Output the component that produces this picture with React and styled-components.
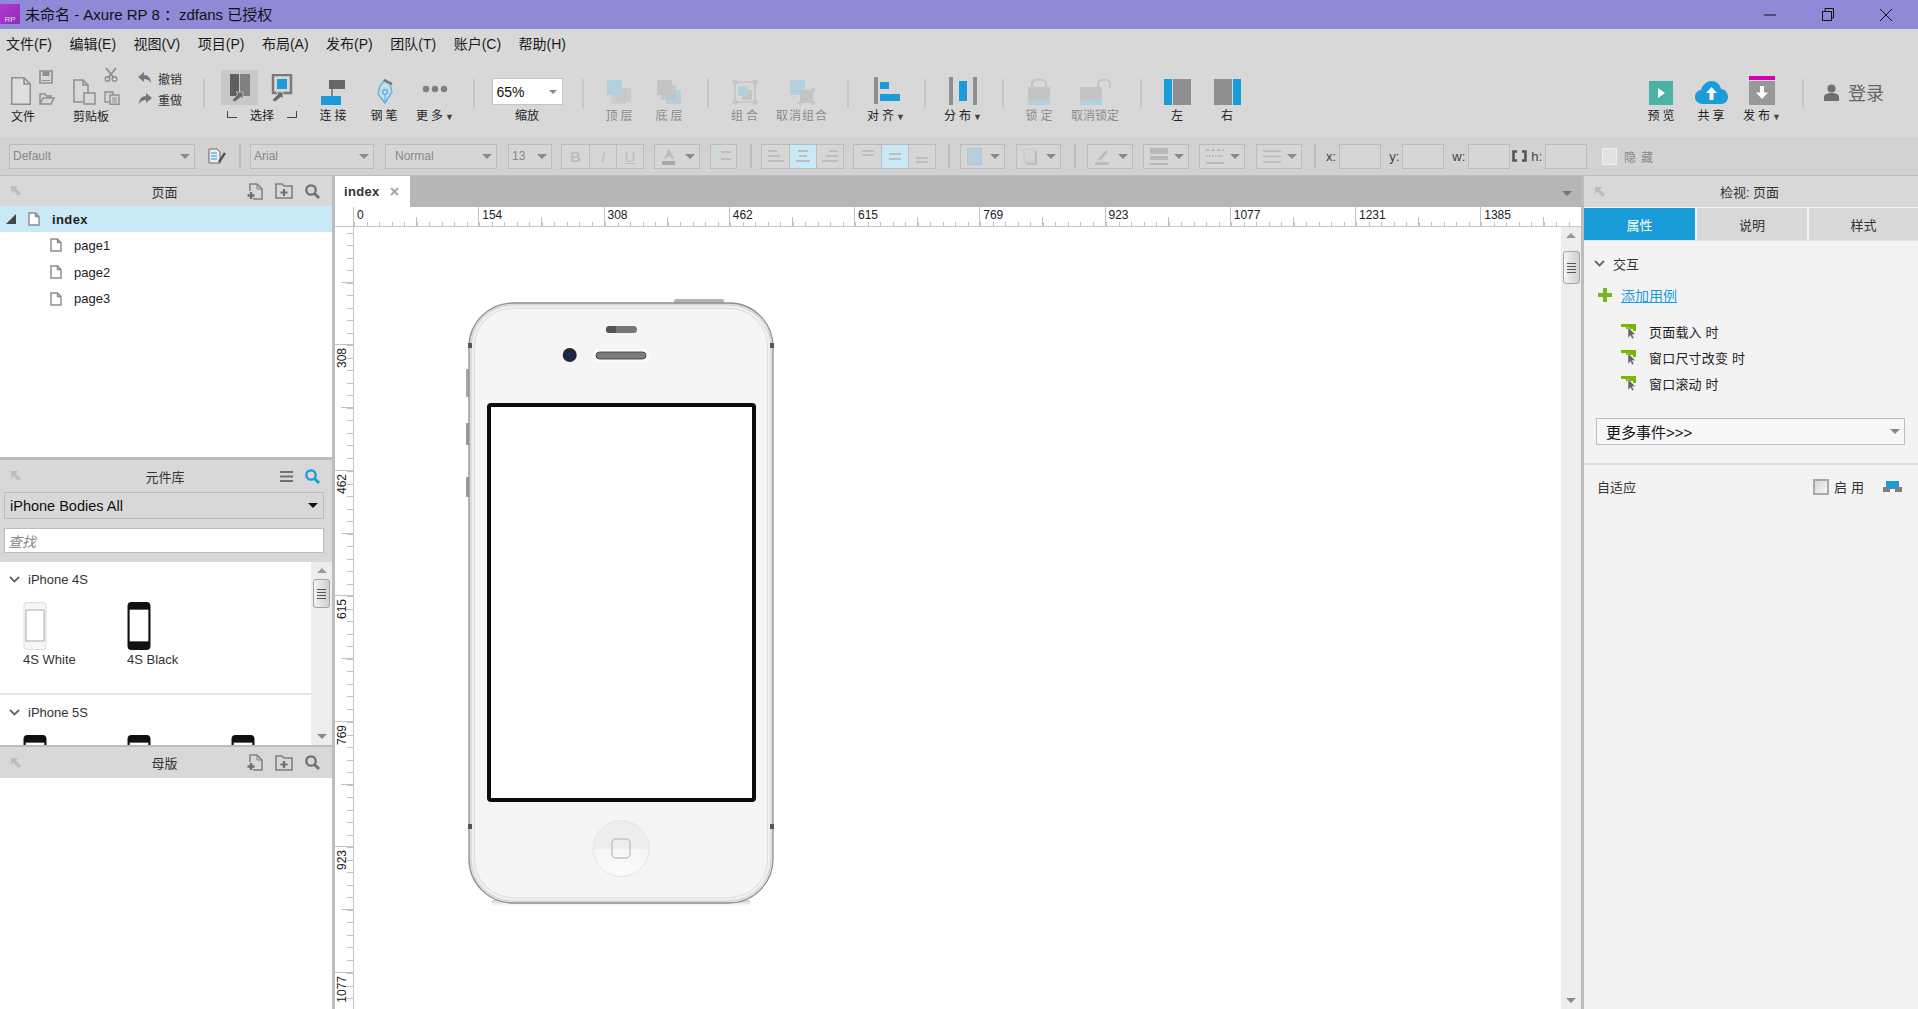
import React from "react";
import styled, { createGlobalStyle, css } from "styled-components";

const FONT = `"Liberation Sans", "Noto Sans CJK SC", sans-serif`;
const BLUE = "#1a9cd8";
const GRAY = "#8f8f8f";
const DIM = "#c4c4c4";
const DIMBLUE = "#b2d0de";

const GlobalStyle = createGlobalStyle`
  html, body { margin: 0; padding: 0; height: 100%; overflow: hidden; }
  body { font-family: ${FONT}; font-size: 13px; color: #222; background: #d8d8d8; }
  #root { height: 100%; }
`;

const ml = css`
  margin-left: ${(p) => p.$ml || 0}px;
`;

const Window = styled.div`
  width: 1918px;
  height: 1009px;
  display: flex;
  flex-direction: column;
  overflow: hidden;
`;

/* title + menu */
const TitleBar = styled.div`
  height: 29px;
  flex: none;
  background: #8e8ad8;
  display: flex;
  align-items: center;
`;

const AppLogo = styled.div`
  width: 20px;
  height: 20px;
  margin-top: -1px;
  background: linear-gradient(135deg, #b13bd0, #8d2bb8);
  color: #e9d8f2;
  font-size: 8px;
  display: flex;
  align-items: flex-end;
  justify-content: center;
`;

const TitleText = styled.div`
  margin: -2px 0 0 5px;
  font-size: 15px;
  color: #111;
`;

const WindowButtons = styled.div`
  margin-left: auto;
  display: flex;
  align-items: center;
  gap: 46px;
  padding-right: 26px;
`;

const MenuBar = styled.div`
  height: 27px;
  flex: none;
  margin-bottom: 2px;
  display: flex;
  align-items: center;
  gap: 17.5px;
  padding-left: 6px;
  font-size: 14px;
  color: #1a1a1a;
`;

/* big toolbar */
const Toolbar = styled.div`
  height: 79px;
  flex: none;
  display: flex;
  align-items: flex-start;
  padding-top: 12px;
  box-sizing: border-box;
`;

const Sep = styled.div`
  flex: none;
  width: 2px;
  height: 29px;
  margin-top: 9px;
  background: #c6c6c6;
  ${ml}
`;

const ToolCell = styled.div`
  flex: none;
  width: ${(p) => p.$w}px;
  display: flex;
  flex-direction: column;
  align-items: center;
  white-space: nowrap;
`;

const IconZone = styled.div`
  height: 35px;
  display: flex;
  align-items: flex-end;
  justify-content: center;
`;

const ToolLabel = styled.div`
  margin-top: 3px;
  height: 16px;
  line-height: 16px;
  font-size: 12px;
  letter-spacing: ${(p) => p.$sp ?? 3}px;
  padding-left: ${(p) => (p.$caret ? 0 : p.$sp ?? 3)}px;
  color: ${(p) => (p.$off ? "#8b8b8b" : "#222")};
`;

const ClusterLabel = styled.div`
  margin-top: 4px;
  height: 16px;
  line-height: 16px;
  font-size: 12px;
  color: #222;
`;

const Caret = styled.span`
  font-size: 9px;
  margin-left: -1px;
  letter-spacing: 0;
  color: #444;
`;

const Cluster = styled.div`
  flex: none;
  width: ${(p) => p.$w}px;
  padding-left: ${(p) => p.$pad}px;
  box-sizing: border-box;
  display: flex;
  flex-direction: column;
`;

const ClusterIcons = styled.div`
  height: 35px;
  display: flex;
  align-items: flex-end;
  gap: 8px;
`;

const StackedIcons = styled.div`
  display: flex;
  flex-direction: column;
  gap: 9px;
`;

const HistoryList = styled.div`
  flex: none;
  width: 71px;
  padding-left: 6px;
  box-sizing: border-box;
  display: flex;
  flex-direction: column;
  gap: 5px;
`;

const HistoryRow = styled.div`
  display: flex;
  align-items: center;
  gap: 6px;
  height: 16px;
  font-size: 12px;
  color: #333;
`;

const SelectGroup = styled.div`
  flex: none;
  width: 100px;
  padding-left: 16px;
  box-sizing: border-box;
`;

const SelectIcons = styled.div`
  display: flex;
  gap: 5px;
`;

const SelectBtn = styled.div`
  width: 37px;
  height: 35px;
  display: flex;
  align-items: center;
  justify-content: center;
  background: ${(p) => (p.$on ? "#c8c8c8" : "transparent")};
`;

const SelectLabels = styled.div`
  width: 70px;
  margin: 1px 0 0 6px;
  height: 16px;
  display: flex;
  align-items: center;
  justify-content: space-between;
  font-size: 12px;
`;

const Corner = styled.span`
  width: 9px;
  height: 6px;
  border-bottom: 1px solid #444;
  border-left: ${(p) => (p.$right ? "0" : "1px solid #444")};
  border-right: ${(p) => (p.$right ? "1px solid #444" : "0")};
`;

const ZoomBox = styled.div`
  width: 71px;
  height: 27px;
  margin-top: 8px;
  padding: 0 5px 0 4px;
  box-sizing: border-box;
  background: #fff;
  border: 1px solid #c4c4c4;
  display: flex;
  align-items: center;
  justify-content: space-between;
  font-size: 14px;
  color: #111;
`;

const RightTools = styled.div`
  margin-left: auto;
  display: flex;
  align-items: flex-start;
`;

const Login = styled.div`
  display: flex;
  align-items: center;
  gap: 9px;
  margin: 8px 34px 0 20px;
  height: 28px;
  font-size: 18px;
  color: #666;
`;

/* format bar */
const FormatBar = styled.div`
  height: 38px;
  flex: none;
  background: #d2d2d2;
  display: flex;
  align-items: center;
  color: #888;
  font-size: 12px;
`;

const FmtSep = styled.div`
  flex: none;
  width: 2px;
  height: 24px;
  background: #bdbdbd;
  ${ml}
`;

const FmtSelect = styled.div`
  flex: none;
  width: ${(p) => p.$w}px;
  height: 25px;
  box-sizing: border-box;
  border: 1px solid #bcbcbc;
  background: #d6d6d6;
  padding: 0 4px 0 ${(p) => p.$pad ?? 3}px;
  display: flex;
  align-items: center;
  justify-content: space-between;
  ${ml}
`;

const FmtSegments = styled.div`
  flex: none;
  display: flex;
  height: 25px;
  box-sizing: border-box;
  border: 1px solid #bcbcbc;
  ${ml}
`;

const FmtSegment = styled.div`
  width: ${(p) => p.$w || 27}px;
  box-sizing: border-box;
  display: flex;
  align-items: center;
  justify-content: center;
  background: ${(p) => (p.$on ? "#c9e9f7" : "#d6d6d6")};
  border-left: ${(p) => (p.$first ? "0" : "1px solid #bcbcbc")};
  font-weight: ${(p) => (p.$bold ? 700 : 400)};
  font-style: ${(p) => (p.$italic ? "italic" : "normal")};
  text-decoration: ${(p) => (p.$under ? "underline" : "none")};
  font-size: 15px;
  color: #bdbdbd;
`;

const FmtPlain = styled.div`
  flex: none;
  display: flex;
  align-items: center;
  ${ml}
`;

const CoordLabel = styled.span`
  flex: none;
  color: #444;
  font-size: 13px;
  ${ml}
`;

const CoordInput = styled.div`
  flex: none;
  width: 42px;
  height: 25px;
  box-sizing: border-box;
  border: 1px solid #bcbcbc;
  background: #d6d6d6;
  ${ml}
`;

const HiddenBox = styled.div`
  flex: none;
  width: 13px;
  height: 15px;
  background: #e2e2e2;
  border: 1px solid #efefef;
  ${ml}
`;

const HiddenLabel = styled.span`
  letter-spacing: 5px;
  margin-left: 7px;
  color: #888;
`;

/* main */
const Main = styled.div`
  flex: 1;
  min-height: 0;
  display: flex;
  border-top: 1px solid #bdbdbd;
`;

const LeftColumn = styled.div`
  flex: none;
  width: 332px;
  display: flex;
  flex-direction: column;
  background: #fff;
`;

const PanelHeader = styled.div`
  height: ${(p) => p.$h || 31}px;
  flex: none;
  background: #d8d8d8;
  display: flex;
  align-items: center;
  padding: 0 12px 0 10px;
  gap: 12px;
`;

const PanelTitle = styled.div`
  flex: 1;
  text-align: center;
  padding-left: ${(p) => p.$shift || 0}px;
  padding-right: ${(p) => p.$rshift || 0}px;
  font-size: 13px;
  color: #333;
`;

const PageList = styled.div`
  height: 251px;
  flex: none;
  border-bottom: 3px solid #bdbdbd;
`;

const PageRow = styled.div`
  height: ${(p) => (p.$top ? 26 : 26.7)}px;
  display: flex;
  align-items: center;
  padding-left: ${(p) => (p.$top ? 6 : 50)}px;
  gap: 12px;
  background: ${(p) => (p.$top ? "#c9e9f7" : "transparent")};
  font-weight: ${(p) => (p.$top ? 700 : 400)};
  letter-spacing: ${(p) => (p.$top ? "0.4px" : "0")};
  color: #222;
  font-size: 13px;
`;

const LibraryControls = styled.div`
  flex: none;
  height: 70px;
  background: #d8d8d8;
  padding: 0 8px 0 4px;
  box-sizing: border-box;
  display: flex;
  flex-direction: column;
  gap: 9px;
`;

const LibrarySelect = styled.div`
  height: 27px;
  box-sizing: border-box;
  border: 1px solid #bdbdbd;
  padding: 0 5px 0 5px;
  display: flex;
  align-items: center;
  justify-content: space-between;
  font-size: 14.5px;
  color: #111;
`;

const SearchBox = styled.div`
  height: 25px;
  box-sizing: border-box;
  border: 1px solid #bdbdbd;
  background: #fff;
  padding-left: 3px;
  display: flex;
  align-items: center;
  font-style: italic;
  font-size: 14px;
  color: #888;
`;

const LibraryBody = styled.div`
  height: 183px;
  flex: none;
  display: flex;
  overflow: hidden;
`;

const LibraryList = styled.div`
  flex: 1;
  overflow: hidden;
`;

const LibrarySection = styled.div`
  height: ${(p) => p.$h}px;
  border-bottom: ${(p) => (p.$line ? "2px solid #e6e6e6" : "0")};
`;

const SectionHead = styled.div`
  height: 34px;
  display: flex;
  align-items: center;
  gap: 8px;
  padding-left: 9px;
  font-size: 13px;
  color: #333;
`;

const WidgetRow = styled.div`
  display: grid;
  grid-template-columns: repeat(3, 104px);
  padding-left: 23px;
  margin-top: 6px;
`;

const Widget = styled.div`
  display: flex;
  flex-direction: column;
  align-items: flex-start;
  gap: 2px;
  font-size: 13px;
  color: #333;
`;

const Scrollbar = styled.div`
  flex: none;
  width: ${(p) => p.$w}px;
  background: #ededed;
  display: flex;
  flex-direction: column;
  align-items: center;
  justify-content: space-between;
  padding: 6px 0;
  box-sizing: border-box;
`;

const ScrollThumb = styled.div`
  width: 17px;
  height: ${(p) => p.$h}px;
  margin-top: ${(p) => p.$top}px;
  margin-bottom: auto;
  box-sizing: border-box;
  border: 1px solid #a4a4a4;
  border-radius: 3px;
  background: linear-gradient(90deg, #f4f4f4, #d0d0d0);
  display: flex;
  flex-direction: column;
  align-items: center;
  justify-content: center;
  gap: 2px;
`;

const Grip = styled.span`
  width: 9px;
  height: 1px;
  background: #555;
`;

const ArrowUp = styled.span`
  width: 0;
  height: 0;
  border-left: 5px solid transparent;
  border-right: 5px solid transparent;
  border-bottom: 5px solid #9a9a9a;
`;

const ArrowDown = styled.span`
  width: 0;
  height: 0;
  border-left: ${(p) => p.$s || 5}px solid transparent;
  border-right: ${(p) => p.$s || 5}px solid transparent;
  border-top: ${(p) => p.$s || 5}px solid ${(p) => p.$c || "#8a8a8a"};
`;

const MasterHeaderWrap = styled.div`
  border-top: 2px solid #bdbdbd;
`;

/* centre */
const CenterColumn = styled.div`
  flex: none;
  width: 1246px;
  display: flex;
  flex-direction: column;
  border-left: 3px solid #bdbdbd;
  border-right: 3px solid #bdbdbd;
  box-sizing: content-box;
  min-height: 0;
`;

const TabStrip = styled.div`
  height: 31px;
  flex: none;
  background: #b6b6b6;
  display: flex;
  align-items: stretch;
  justify-content: space-between;
  padding-right: 9px;
`;

const Tab = styled.div`
  width: 75px;
  box-sizing: border-box;
  background: #fff;
  padding-left: 9px;
  display: flex;
  align-items: center;
  gap: 11px;
  font-weight: 700;
  font-size: 13px;
  letter-spacing: 0.3px;
  color: #333;
`;

const TabMenu = styled.div`
  display: flex;
  align-items: center;
  padding-top: 3px;
`;

const RulerTop = styled.div`
  height: 19px;
  flex: none;
  background: #fff;
  display: flex;
  overflow: hidden;
  padding-left: 18px;
  border-bottom: 1px solid #c6c6c6;
`;

const tickX = css`
  background-image: repeating-linear-gradient(90deg, #c2c2c2 0 1px, transparent 1px 12.525px);
  background-size: 100% 4px;
  background-position: 0 100%;
  background-repeat: no-repeat;
`;

const tickY = css`
  background-image: repeating-linear-gradient(180deg, #c2c2c2 0 1px, transparent 1px 12.55px);
  background-size: 6px 100%;
  background-position: 100% 0;
  background-repeat: no-repeat;
`;

const RulerCellX = styled.div`
  flex: none;
  width: 125.25px;
  height: 19px;
  box-sizing: border-box;
  border-left: 1px solid #c2c2c2;
  padding-left: 3px;
  position: relative;
  font-size: 12px;
  line-height: 16px;
  color: #222;
  ${tickX}
  &::after {
    content: "";
    position: absolute;
    left: 62px;
    bottom: 0;
    width: 1px;
    height: 9px;
    background: #c2c2c2;
  }
`;

const CanvasRow = styled.div`
  flex: 1;
  min-height: 0;
  display: flex;
  background: #fff;
`;

const RulerLeft = styled.div`
  width: 18px;
  flex: none;
  border-right: 1px solid #c6c6c6;
  overflow: hidden;
`;

const RulerCellY = styled.div`
  width: 18px;
  height: 125.5px;
  box-sizing: border-box;
  border-top: 1px solid #c2c2c2;
  position: relative;
  margin-top: ${(p) => p.$mt || 0}px;
  ${tickY}
  &::after {
    content: "";
    position: absolute;
    right: 0;
    top: 62px;
    height: 1px;
    width: 12px;
    background: #c2c2c2;
  }
`;

const RulerLabelY = styled.span`
  position: absolute;
  left: 1px;
  top: 3px;
  writing-mode: vertical-rl;
  transform: rotate(180deg);
  font-size: 12px;
  line-height: 13px;
  color: #222;
`;

const Canvas = styled.div`
  flex: 1;
  min-width: 0;
  padding: 71px 0 0 108px;
  overflow: hidden;
`;

/* inspector */
const RightColumn = styled.div`
  flex: 1;
  min-width: 0;
  display: flex;
  flex-direction: column;
  background: #f3f3f3;
`;

const InspectorTabs = styled.div`
  flex: none;
  height: 32px;
  margin-top: 1px;
  display: grid;
  grid-template-columns: 111px 110px 1fr;
  gap: 2px;
  border-bottom: 1px solid #e3e3e3;
`;

const InspectorTab = styled.div`
  display: flex;
  align-items: center;
  justify-content: center;
  font-size: 13px;
  background: ${(p) => (p.$on ? BLUE : "#d8d8d8")};
  color: ${(p) => (p.$on ? "#fff" : "#333")};
`;

const InspectorBody = styled.div`
  padding: 12px 13px 0 9px;
  display: flex;
  flex-direction: column;
`;

const GroupHead = styled.div`
  display: flex;
  align-items: center;
  gap: 8px;
  height: 20px;
  padding-left: 1px;
  font-size: 13px;
  color: #333;
`;

const AddCase = styled.div`
  display: flex;
  align-items: center;
  gap: 9px;
  margin-top: 11px;
  padding-left: 5px;
  height: 22px;
`;

const CaseLink = styled.a`
  color: ${BLUE};
  font-size: 14px;
  text-decoration: underline;
`;

const EventList = styled.div`
  margin-top: 15.5px;
  padding-left: 28px;
  display: flex;
  flex-direction: column;
  gap: 6px;
`;

const EventRow = styled.div`
  height: 20px;
  display: flex;
  align-items: center;
  gap: 13px;
  font-size: 13px;
  letter-spacing: 0.2px;
  color: #222;
`;

const MoreEvents = styled.div`
  margin: 24px 0 0 3px;
  height: 27px;
  box-sizing: border-box;
  border: 1px solid #bdbdbd;
  background: #f7f7f7;
  padding: 0 4px 0 9px;
  display: flex;
  align-items: center;
  justify-content: space-between;
  font-size: 15px;
  color: #111;
`;

const AdaptiveRow = styled.div`
  margin-top: 18px;
  border-top: 2px solid #e2e2e2;
  height: 44px;
  padding: 0 16px 0 13px;
  display: flex;
  align-items: center;
  font-size: 13px;
  color: #333;
`;

const AdaptiveCheck = styled.span`
  width: 16px;
  height: 16px;
  box-sizing: border-box;
  margin-left: auto;
  border: 2px solid #a8a8a8;
  background: linear-gradient(135deg, #d6d6d6, #f6f6f6);
`;

const AdaptiveText = styled.span`
  margin: 0 15px 0 5px;
  letter-spacing: 4px;
`;

/* icons */
const Svg = ({ w, h, children, ...rest }) => (
  <svg width={w} height={h} viewBox={`0 0 ${w} ${h}`} style={{ display: "block", flex: "none" }} {...rest}>
    {children}
  </svg>
);

const DocIcon = ({ w = 20, h = 28, c = GRAY, sw = 1.5 }) => (
  <Svg w={w} h={h}>
    <path
      d={`M${sw / 2} ${sw / 2}H${w - 7}L${w - sw / 2} 7V${h - sw / 2}H${sw / 2}Z M${w - 7} ${sw / 2}V7H${w - sw / 2}`}
      fill="#dedede"
      stroke={c}
      strokeWidth={sw}
    />
  </Svg>
);

const PageDoc = ({ c = "#8a8a8a" }) => (
  <Svg w={12} h={14}>
    <path d="M1 1H7.5L11 4.5V13H1Z M7.5 1V4.5H11" fill="#fff" stroke={c} strokeWidth="1.4" />
  </Svg>
);

const SaveIcon = () => (
  <Svg w={14} h={14}>
    <path d="M1 1H13V13H1Z" fill="none" stroke={GRAY} strokeWidth="1.6" />
    <path d="M3.5 1.5H10.5V6H3.5Z" fill={GRAY} />
    <path d="M3 10H11V11H3Z" fill={GRAY} />
  </Svg>
);

const OpenIcon = () => (
  <Svg w={16} h={12}>
    <path d="M1 11V1H6L7.5 3H12V5 M1 11L4 5H15L12 11Z" fill="none" stroke={GRAY} strokeWidth="1.5" />
  </Svg>
);

const CutIcon = () => (
  <Svg w={14} h={15}>
    <path d="M2 1L10 11 M12 1L4 11" stroke={GRAY} strokeWidth="1.8" />
    <circle cx="3.5" cy="12" r="2.3" fill="none" stroke={GRAY} strokeWidth="1.4" />
    <circle cx="10.5" cy="12" r="2.3" fill="none" stroke={GRAY} strokeWidth="1.4" />
  </Svg>
);

const CopyIcon = () => (
  <Svg w={16} h={14}>
    <path d="M1 1H9V11H1Z" fill="#d8d8d8" stroke={GRAY} strokeWidth="1.4" />
    <path d="M6 4H15V13.3H6Z" fill="#d8d8d8" stroke={GRAY} strokeWidth="1.4" />
    <path d="M8 7H13M8 9H13M8 11H13" stroke={GRAY} />
  </Svg>
);

const ClipboardDoc = () => (
  <Svg w={23} h={26}>
    <path d="M1 1H10L15 6V23H1Z M10 1V6H15" fill="#d8d8d8" stroke={GRAY} strokeWidth="1.5" />
    <path d="M11 14H22V25H11Z" fill="#d8d8d8" stroke={GRAY} strokeWidth="1.5" />
  </Svg>
);

const UndoIcon = ({ flip }) => (
  <Svg w={14} h={12}>
    <path
      d="M6 0L0 5L6 10V7C9 7 11 8 13 11C13 6 10 3 6 3Z"
      fill="#777"
      transform={flip ? "translate(14 0) scale(-1 1)" : undefined}
    />
  </Svg>
);

const SelectIntersect = () => (
  <Svg w={22} h={28}>
    <rect x="1" y="0" width="9" height="22" fill="#5f5f5f" />
    <rect x="11" y="0" width="10" height="22" fill="#808080" />
    <path d="M3 26L9 20L7 18H14V25L12 23L6 28Z" fill="#6a6a6a" stroke="#c8c8c8" strokeWidth="0.8" />
  </Svg>
);

const SelectContain = () => (
  <Svg w={22} h={28}>
    <rect x="2" y="1" width="18" height="18" fill="none" stroke="#7a7a7a" strokeWidth="2.5" />
    <rect x="6" y="5" width="10" height="10" fill={BLUE} />
    <path d="M1 26L7 20L5 18H12V25L10 23L4 28Z" fill="#6a6a6a" stroke="#d8d8d8" strokeWidth="0.8" />
  </Svg>
);

const ConnectIcon = () => (
  <Svg w={24} h={26}>
    <rect x="8" y="1" width="16" height="9" fill="#666" />
    <path d="M11 10V17" stroke="#666" strokeWidth="1.4" />
    <rect x="0" y="17" width="20" height="9" fill={BLUE} />
  </Svg>
);

const PenIcon = () => (
  <Svg w={19} h={26}>
    <path d="M9 2L15 5L17 13L10 24L3 15L5 7Z" fill="#c3dfec" stroke="#59b3dc" strokeWidth="1.4" />
    <circle cx="10" cy="13" r="2.5" fill="none" stroke="#59b3dc" strokeWidth="1.3" />
    <path d="M10 15V23" stroke="#59b3dc" />
    <path d="M9 1L17 5" stroke="#777" strokeWidth="2.5" />
  </Svg>
);

const DotsIcon = () => (
  <Svg w={26} h={22}>
    <circle cx="4" cy="6" r="3.2" fill="#808080" />
    <circle cx="13" cy="6" r="3.2" fill="#808080" />
    <circle cx="22" cy="6" r="3.2" fill="#808080" />
  </Svg>
);

const TopLayer = () => (
  <Svg w={26} h={26}>
    <rect x="5" y="12" width="15" height="13" fill={DIM} opacity="0.55" />
    <rect x="10" y="9" width="15" height="14" fill={DIM} opacity="0.7" />
    <rect x="1" y="1" width="15" height="15" fill={DIMBLUE} />
  </Svg>
);

const BottomLayer = () => (
  <Svg w={26} h={26}>
    <rect x="10" y="11" width="15" height="14" fill={DIMBLUE} />
    <rect x="5" y="6" width="15" height="15" fill={DIM} opacity="0.75" />
    <rect x="1" y="1" width="15" height="15" fill={DIM} />
  </Svg>
);

const GroupIcon = () => (
  <Svg w={26} h={26}>
    <path d="M3 3H23V23H3Z" fill="none" stroke={DIM} strokeWidth="1.6" />
    <circle cx="3" cy="3" r="2.6" fill={DIM} />
    <circle cx="23" cy="3" r="2.6" fill={DIM} />
    <circle cx="3" cy="23" r="2.6" fill={DIM} />
    <circle cx="23" cy="23" r="2.6" fill={DIM} />
    <rect x="10" y="11" width="10" height="10" fill={DIM} />
    <rect x="6" y="7" width="10" height="10" fill={DIMBLUE} />
  </Svg>
);

const UngroupIcon = () => (
  <Svg w={26} h={26}>
    <rect x="1" y="1" width="15" height="15" fill={DIMBLUE} />
    <rect x="11" y="11" width="13" height="13" fill={DIM} />
    <circle cx="3" cy="3" r="2" fill={DIM} />
    <circle cx="24" cy="11" r="2" fill={DIM} />
    <circle cx="11" cy="24" r="2" fill={DIM} />
    <circle cx="24" cy="24" r="2" fill={DIM} />
  </Svg>
);

const AlignIcon = () => (
  <Svg w={27} h={28}>
    <rect x="1" y="0" width="4" height="27" fill={GRAY} />
    <rect x="7" y="5" width="9" height="7" fill={BLUE} />
    <rect x="7" y="17" width="20" height="7" fill={BLUE} />
  </Svg>
);

const DistributeIcon = () => (
  <Svg w={28} h={28}>
    <rect x="0" y="0" width="4" height="28" fill={GRAY} />
    <rect x="10" y="4" width="8" height="20" fill={BLUE} />
    <rect x="24" y="0" width="4" height="28" fill={GRAY} />
  </Svg>
);

const LockIcon = () => (
  <Svg w={24} h={28}>
    <path d="M5 11V7C5 1 19 1 19 7V11" fill="none" stroke={DIM} strokeWidth="2" />
    <rect x="1" y="10" width="22" height="13" fill={DIM} />
    <rect x="1" y="23" width="22" height="5" fill={DIMBLUE} />
  </Svg>
);

const UnlockIcon = () => (
  <Svg w={32} h={28}>
    <path d="M19 11V7C19 1 31 1 31 7V11" fill="none" stroke={DIM} strokeWidth="2" />
    <rect x="1" y="10" width="22" height="13" fill={DIM} />
    <rect x="1" y="23" width="22" height="5" fill={DIMBLUE} />
  </Svg>
);

const DockIcon = ({ right }) => (
  <Svg w={27} h={26}>
    <rect x="0" y="0" width="27" height="26" fill={GRAY} />
    <rect x={right ? 19 : 0} y="0" width="8" height="26" fill={BLUE} />
    <rect x={right ? 18 : 8} y="0" width="1" height="26" fill="#d8d8d8" />
  </Svg>
);

const PreviewIcon = () => (
  <Svg w={24} h={24}>
    <rect width="24" height="24" fill="#4db2a6" />
    <path d="M9 7L16 12L9 17Z" fill="#fff" />
  </Svg>
);

const ShareIcon = () => (
  <Svg w={33} h={24}>
    <path d="M8 23C3 23 0 20 0 16C0 12 3 9 6 9C7 4 12 0 16.5 0C21 0 25 3 26 8C30 8 33 12 33 16C33 20 30 23 26 23Z" fill={BLUE} />
    <path d="M16.5 6L22 12H18.5V19H14.5V12H11Z" fill="#fff" />
  </Svg>
);

const PublishIcon = () => (
  <Svg w={26} h={29}>
    <rect width="26" height="4" fill="#d400b4" />
    <rect y="5" width="26" height="24" fill="#989898" />
    <path d="M13 23L7 16.5H11V10H15V16.5H19Z" fill="#fff" />
  </Svg>
);

const PersonIcon = () => (
  <Svg w={15} h={17}>
    <circle cx="7.5" cy="4.5" r="4" fill="#6f6f6f" />
    <path d="M0 17V13C0 10 4 9 7.5 9C11 9 15 10 15 13V17Z" fill="#6f6f6f" />
  </Svg>
);

const StyleDocIcon = () => (
  <Svg w={18} h={16}>
    <path d="M1 1H9L12 4V15H1Z" fill="#eee" stroke="#666" />
    <path d="M3 5H9M3 8H9M3 11H9" stroke={BLUE} />
    <path d="M11 14L17 5" stroke="#555" strokeWidth="2.5" />
  </Svg>
);

const PinIcon = () => (
  <Svg w={12} h={12}>
    <path d="M1 1H8L5.8 3.2L11 8.5L8.5 11L3.2 5.8L1 8Z" fill="#bdbdbd" />
  </Svg>
);

const NewPageIcon = () => (
  <Svg w={16} h={17}>
    <path d="M3 8V1H10L15 6V16H6" fill="none" stroke="#808080" strokeWidth="1.5" />
    <path d="M10 1V6H15" fill="none" stroke="#808080" />
    <path d="M4 9V16M0.5 12.5H7.5" stroke="#707070" strokeWidth="2.4" />
  </Svg>
);

const NewFolderIcon = () => (
  <Svg w={18} h={16}>
    <path d="M1 15V1H7L9 3H17V15Z" fill="none" stroke="#808080" strokeWidth="1.6" />
    <path d="M9 6V13M5.5 9.5H12.5" stroke="#707070" strokeWidth="2.2" />
  </Svg>
);

const SearchIcon = ({ c = "#707070" }) => (
  <Svg w={15} h={15}>
    <circle cx="6" cy="6" r="4.7" fill="none" stroke={c} strokeWidth="2.3" />
    <path d="M9.5 9.5L14 14" stroke={c} strokeWidth="2.8" />
  </Svg>
);

const MenuIcon = () => (
  <Svg w={13} h={13}>
    <path d="M0 2H13M0 6.5H13M0 11H13" stroke="#707070" strokeWidth="2" />
  </Svg>
);

const TreeToggle = () => (
  <Svg w={10} h={10}>
    <path d="M10 0V10H0Z" fill="#444" />
  </Svg>
);

const Chevron = () => (
  <Svg w={11} h={7}>
    <path d="M1 1L5.5 5.5L10 1" fill="none" stroke="#666" strokeWidth="1.8" />
  </Svg>
);

const CloseTab = () => (
  <Svg w={9} h={9}>
    <path d="M1 1L8 8M8 1L1 8" stroke="#aaa" strokeWidth="2.2" />
  </Svg>
);

const PlusIcon = () => (
  <Svg w={14} h={14}>
    <path d="M7 0V14M0 7H14" stroke="#7ab51d" strokeWidth="4" />
  </Svg>
);

const EventIcon = () => (
  <Svg w={15} h={16}>
    <path d="M0 0H15V7H12V5H5V3H0Z" fill="#7ab800" />
    <path d="M7 3V14L9.5 11.5L11 15L13 14L11.3 10.6H14.5Z" fill="#666" stroke="#f3f3f3" strokeWidth="0.5" />
  </Svg>
);

const AdaptiveIcon = () => (
  <Svg w={19} h={11}>
    <path d="M3 0H16V8H3Z" fill={BLUE} />
    <path d="M0 6H7V11H0ZM12 6H19V11H12Z" fill="#808080" />
    <path d="M7 8H12V11H7Z" fill="#fff" />
  </Svg>
);

const AlignLines = ({ kind, c = "#bdbdbd" }) => {
  const d = {
    l: "M0 2H9M0 7H12M0 12H16",
    c: "M3 2H13M4 7H12M1 12H15",
    r: "M7 2H16M4 7H16M0 12H16",
    t: "M2 2H14M2 6H14",
    m: "M2 5H14M2 10H14",
    b: "M2 9H14M2 13H14",
  }[kind];
  return (
    <Svg w={16} h={14}>
      <path d={d} stroke={c} strokeWidth="2" />
    </Svg>
  );
};

const TextColorIcon = () => (
  <Svg w={16} h={17}>
    <path d="M8 0L13 11H10.5L9.5 8.5H6.5L5.5 11H3Z" fill="#bcbcbc" />
    <rect x="1" y="13" width="13" height="4" fill="#a9a9a9" />
  </Svg>
);

const ListIcon = () => (
  <Svg w={16} h={14}>
    <path d="M0 3H3M0 10H3" stroke="#b8dbe9" strokeWidth="2.5" />
    <path d="M5 3H15M5 10H15" stroke="#bdbdbd" strokeWidth="2" />
  </Svg>
);

const FillIcon = () => (
  <Svg w={15} h={17}>
    <rect width="15" height="17" fill={DIMBLUE} stroke="#bcbcbc" />
  </Svg>
);

const ShadowIcon = () => (
  <Svg w={15} h={17}>
    <rect x="1" y="1" width="11" height="13" fill="#d4d4d4" stroke="#c6c6c6" />
    <path d="M13 3V16H3" fill="none" stroke="#bdbdbd" strokeWidth="2" />
  </Svg>
);

const LineColorIcon = () => (
  <Svg w={16} h={17}>
    <path d="M4 11L12 2L14 4L6 13Z" fill="#bcbcbc" />
    <rect x="1" y="14" width="14" height="3" fill="#bcbcbc" />
  </Svg>
);

const LineWeightIcon = () => (
  <Svg w={18} h={17}>
    <rect width="18" height="6" fill="#b8b8b8" />
    <rect y="8" width="18" height="4" fill="#b8b8b8" />
    <rect y="15" width="18" height="2" fill="#b8b8b8" />
  </Svg>
);

const LineStyleIcon = () => (
  <Svg w={18} h={17}>
    <path d="M0 2H18" stroke="#b8b8b8" strokeWidth="2" strokeDasharray="3 2.5" />
    <path d="M0 8H18" stroke="#b8b8b8" strokeWidth="2" strokeDasharray="1.5 1.5" />
    <path d="M0 15H18" stroke="#b8b8b8" strokeWidth="2" />
  </Svg>
);

const ArrowStyleIcon = () => (
  <Svg w={18} h={17}>
    <path d="M0 3H18M0 8.5H18M0 14H18" stroke="#b8b8b8" strokeWidth="1.4" />
  </Svg>
);

const LinkSizeIcon = () => (
  <Svg w={15} h={12}>
    <path d="M5 1.5H1.5V10.5H5M10 1.5H13.5V10.5H10" fill="none" stroke="#555" strokeWidth="2.6" />
  </Svg>
);

const WinMin = () => (
  <Svg w={12} h={12}>
    <path d="M0 6H12" stroke="#111" />
  </Svg>
);

const WinRestore = () => (
  <Svg w={12} h={13}>
    <path d="M0.5 3.5H9.5V12.5H0.5Z M3 3V0.5H11.5V10H10" fill="none" stroke="#111" />
  </Svg>
);

const WinClose = () => (
  <Svg w={12} h={12}>
    <path d="M0 0L12 12M12 0L0 12" stroke="#111" />
  </Svg>
);

const ThumbPhone = ({ dark, w = 24, h = 48 }) => (
  <Svg w={w} h={h}>
    <rect x="1" y="0.5" width={w - 2} height={h - 1} rx="3" fill={dark ? "#111" : "#f6f6f6"} stroke={dark ? "#111" : "#ddd"} />
    <rect x="3" y="8" width={w - 6} height={h - 17} fill="#fff" stroke={dark ? "#fff" : "#888"} strokeWidth="0.7" />
  </Svg>
);

const PhoneBody = () => (
  <svg width="320" height="620" viewBox="0 0 320 620" style={{ display: "block" }}>
    <defs>
      <linearGradient id="homeGlow" x1="0" y1="0" x2="0" y2="1">
        <stop offset="0" stopColor="#ececec" />
        <stop offset="0.5" stopColor="#eeeeee" />
        <stop offset="0.52" stopColor="#f6f6f6" />
        <stop offset="1" stopColor="#fbfbfb" />
      </linearGradient>
      <linearGradient id="bottomShade" x1="0" y1="0" x2="0" y2="1">
        <stop offset="0" stopColor="#cfcfcf" />
        <stop offset="1" stopColor="#ffffff" />
      </linearGradient>
    </defs>
    <rect x="30" y="602" width="258" height="6" fill="url(#bottomShade)" />
    <rect x="212" y="1" width="50" height="8" rx="2" fill="#b4b4b4" />
    <rect x="4" y="71" width="4" height="28" rx="1" fill="#a8a8a8" />
    <rect x="4" y="125" width="4" height="22" rx="1" fill="#999" />
    <rect x="4" y="179" width="4" height="20" rx="1" fill="#999" />
    <rect x="7" y="5" width="304" height="600" rx="44" fill="#e6e6e6" stroke="#8e8e8e" strokeWidth="1.3" />
    <rect x="9" y="7" width="300" height="596" rx="42" fill="#f0f0f0" stroke="#d0d0d0" />
    <rect x="12.5" y="10.5" width="293" height="589" rx="38" fill="#f5f5f5" stroke="#dedede" />
    <rect x="6" y="45" width="4" height="5" fill="#555" />
    <rect x="308" y="45" width="4" height="5" fill="#555" />
    <rect x="6" y="526" width="4" height="5" fill="#555" />
    <rect x="308" y="526" width="4" height="5" fill="#555" />
    <rect x="144" y="28" width="31" height="7" rx="3.5" fill="#777" />
    <path d="M147.5 28H154V35H147.5A3.5 3.5 0 0 1 147.5 28Z" fill="#555" />
    <circle cx="107.7" cy="57" r="7" fill="#23262e" />
    <circle cx="107.7" cy="57" r="3" fill="#0f2a66" />
    <rect x="130" y="51" width="58" height="13" rx="6.5" fill="#fbfbfb" />
    <rect x="134" y="54" width="50" height="7" rx="3.5" fill="#7d7d7d" stroke="#333" strokeWidth="0.8" />
    <rect x="27" y="107" width="265" height="395" rx="2" fill="#fff" stroke="#0c0c0c" strokeWidth="4" />
    <circle cx="159" cy="550.5" r="28" fill="url(#homeGlow)" stroke="#e6e6e6" />
    <rect x="150" y="541" width="18" height="19" rx="4" fill="none" stroke="#c4c4c4" strokeWidth="1.5" />
  </svg>
);

const MENU = ["文件(F)", "编辑(E)", "视图(V)", "项目(P)", "布局(A)", "发布(P)", "团队(T)", "账户(C)", "帮助(H)"];
const PAGES = ["page1", "page2", "page3"];
const EVENTS = ["页面载入 时", "窗口尺寸改变 时", "窗口滚动 时"];
const TICKS_X = [0, 154, 308, 462, 615, 769, 923, 1077, 1231, 1385];
const TICKS_Y = [154, 308, 462, 615, 769, 923, 1077];

const Tool = ({ w, label, off, caret, icon, sp }) => (
  <ToolCell $w={w}>
    <IconZone>{icon}</IconZone>
    <ToolLabel $off={off} $caret={caret} $sp={sp}>
      {label}
      {caret && <Caret>▼</Caret>}
    </ToolLabel>
  </ToolCell>
);

const PanelTools = () => (
  <>
    <NewPageIcon />
    <NewFolderIcon />
    <SearchIcon />
  </>
);

export default function App() {
  return (
    <Window>
      <GlobalStyle />
      <TitleBar>
        <AppLogo>RP</AppLogo>
        <TitleText>未命名 - Axure RP 8 ：zdfans 已授权</TitleText>
        <WindowButtons>
          <WinMin />
          <WinRestore />
          <WinClose />
        </WindowButtons>
      </TitleBar>

      <MenuBar>
        {MENU.map((m, i) => (
          <span key={i}>{m}</span>
        ))}
      </MenuBar>

      <Toolbar>
        <Cluster $w={66} $pad={11}>
          <ClusterIcons>
            <DocIcon />
            <StackedIcons>
              <SaveIcon />
              <OpenIcon />
            </StackedIcons>
          </ClusterIcons>
          <ClusterLabel>文件</ClusterLabel>
        </Cluster>
        <Cluster $w={66} $pad={7}>
          <ClusterIcons>
            <ClipboardDoc />
            <StackedIcons>
              <CutIcon />
              <CopyIcon />
            </StackedIcons>
          </ClusterIcons>
          <ClusterLabel>剪贴板</ClusterLabel>
        </Cluster>
        <HistoryList>
          <HistoryRow>
            <UndoIcon />
            撤销
          </HistoryRow>
          <HistoryRow>
            <UndoIcon flip />
            重做
          </HistoryRow>
        </HistoryList>
        <Sep />
        <SelectGroup>
          <SelectIcons>
            <SelectBtn $on>
              <SelectIntersect />
            </SelectBtn>
            <SelectBtn>
              <SelectContain />
            </SelectBtn>
          </SelectIcons>
          <SelectLabels>
            <Corner />
            选择
            <Corner $right />
          </SelectLabels>
        </SelectGroup>
        <Tool w={56} label="连接" icon={<ConnectIcon />} />
        <Tool w={46} label="钢笔" icon={<PenIcon />} />
        <Tool w={56} label="更多" caret icon={<DotsIcon />} />
        <Sep $ml={10} />
        <ToolCell $w={104}>
          <ZoomBox>
            65%
            <ArrowDown $s={4} />
          </ZoomBox>
          <ToolLabel $sp={0}>缩放</ToolLabel>
        </ToolCell>
        <Sep $ml={3} />
        <Tool w={70} label="顶层" off icon={<TopLayer />} />
        <Tool w={30} label="底层" off icon={<BottomLayer />} />
        <Sep $ml={23} />
        <Tool w={71} label="组合" off icon={<GroupIcon />} />
        <Tool w={43} label="取消组合" off sp={1} icon={<UngroupIcon />} />
        <Sep $ml={24} />
        <Tool w={74} label="对齐" caret icon={<AlignIcon />} />
        <Sep $ml={1} />
        <Tool w={74} label="分布" caret icon={<DistributeIcon />} />
        <Sep $ml={2} />
        <Tool w={70} label="锁定" off icon={<LockIcon />} />
        <Tool w={42} label="取消锁定" off sp={0} icon={<UnlockIcon />} />
        <Sep $ml={24} />
        <Tool w={70} label="左" sp={0} icon={<DockIcon />} />
        <Tool w={30} label="右" sp={0} icon={<DockIcon right />} />
        <RightTools>
          <Tool w={50} label="预览" icon={<PreviewIcon />} />
          <Tool w={50} label="共享" icon={<ShareIcon />} />
          <Tool w={52} label="发布" caret icon={<PublishIcon />} />
          <Sep $ml={14} />
          <Login>
            <PersonIcon />
            登录
          </Login>
        </RightTools>
      </Toolbar>

      <FormatBar>
        <FmtSelect $w={186} $ml={9}>
          Default
          <ArrowDown />
        </FmtSelect>
        <FmtPlain $ml={13}>
          <StyleDocIcon />
        </FmtPlain>
        <FmtSep $ml={13} />
        <FmtSelect $w={124} $ml={9}>
          Arial
          <ArrowDown />
        </FmtSelect>
        <FmtSelect $w={112} $ml={11} $pad={9}>
          Normal
          <ArrowDown />
        </FmtSelect>
        <FmtSelect $w={44} $ml={11}>
          13
          <ArrowDown />
        </FmtSelect>
        <FmtSegments $ml={9}>
          <FmtSegment $first $bold>
            B
          </FmtSegment>
          <FmtSegment $italic>I</FmtSegment>
          <FmtSegment $under>U</FmtSegment>
        </FmtSegments>
        <FmtSelect $w={46} $ml={10} $pad={6}>
          <TextColorIcon />
          <ArrowDown />
        </FmtSelect>
        <FmtSegments $ml={10}>
          <FmtSegment $first $w={25}>
            <ListIcon />
          </FmtSegment>
        </FmtSegments>
        <FmtSep $ml={13} />
        <FmtSegments $ml={9}>
          <FmtSegment $first>
            <AlignLines kind="l" />
          </FmtSegment>
          <FmtSegment $on>
            <AlignLines kind="c" />
          </FmtSegment>
          <FmtSegment>
            <AlignLines kind="r" />
          </FmtSegment>
        </FmtSegments>
        <FmtSegments $ml={9}>
          <FmtSegment $first>
            <AlignLines kind="t" />
          </FmtSegment>
          <FmtSegment $on>
            <AlignLines kind="m" />
          </FmtSegment>
          <FmtSegment>
            <AlignLines kind="b" />
          </FmtSegment>
        </FmtSegments>
        <FmtSep $ml={12} />
        <FmtSelect $w={45} $ml={10} $pad={6}>
          <FillIcon />
          <ArrowDown />
        </FmtSelect>
        <FmtSelect $w={45} $ml={11} $pad={6}>
          <ShadowIcon />
          <ArrowDown />
        </FmtSelect>
        <FmtSep $ml={13} />
        <FmtSelect $w={46} $ml={11} $pad={6}>
          <LineColorIcon />
          <ArrowDown />
        </FmtSelect>
        <FmtSelect $w={46} $ml={10} $pad={6}>
          <LineWeightIcon />
          <ArrowDown />
        </FmtSelect>
        <FmtSelect $w={46} $ml={10} $pad={6}>
          <LineStyleIcon />
          <ArrowDown />
        </FmtSelect>
        <FmtSelect $w={46} $ml={11} $pad={6}>
          <ArrowStyleIcon />
          <ArrowDown />
        </FmtSelect>
        <FmtSep $ml={12} />
        <CoordLabel $ml={10}>x:</CoordLabel>
        <CoordInput $ml={3} />
        <CoordLabel $ml={8}>y:</CoordLabel>
        <CoordInput $ml={3} />
        <CoordLabel $ml={8}>w:</CoordLabel>
        <CoordInput $ml={3} />
        <FmtPlain $ml={2}>
          <LinkSizeIcon />
        </FmtPlain>
        <CoordLabel $ml={4}>h:</CoordLabel>
        <CoordInput $ml={3} />
        <HiddenBox $ml={15} />
        <HiddenLabel>隐藏</HiddenLabel>
      </FormatBar>

      <Main>
        <LeftColumn>
          <PanelHeader $h={30}>
            <PinIcon />
            <PanelTitle $shift={60}>页面</PanelTitle>
            <PanelTools />
          </PanelHeader>
          <PageList>
            <PageRow $top>
              <TreeToggle />
              <PageDoc />
              index
            </PageRow>
            {PAGES.map((p) => (
              <PageRow key={p}>
                <PageDoc />
                {p}
              </PageRow>
            ))}
          </PageList>

          <PanelHeader $h={32}>
            <PinIcon />
            <PanelTitle $shift={28}>元件库</PanelTitle>
            <MenuIcon />
            <SearchIcon c={BLUE} />
          </PanelHeader>
          <LibraryControls>
            <LibrarySelect>
              iPhone Bodies All
              <ArrowDown $s={5} $c="#111" />
            </LibrarySelect>
            <SearchBox>查找</SearchBox>
          </LibraryControls>
          <LibraryBody>
            <LibraryList>
              <LibrarySection $h={131} $line>
                <SectionHead>
                  <Chevron />
                  iPhone 4S
                </SectionHead>
                <WidgetRow>
                  <Widget>
                    <ThumbPhone />
                    4S White
                  </Widget>
                  <Widget>
                    <ThumbPhone dark />
                    4S Black
                  </Widget>
                </WidgetRow>
              </LibrarySection>
              <LibrarySection $h={50}>
                <SectionHead>
                  <Chevron />
                  iPhone 5S
                </SectionHead>
                <WidgetRow>
                  <ThumbPhone dark />
                  <ThumbPhone dark />
                  <ThumbPhone dark />
                </WidgetRow>
              </LibrarySection>
            </LibraryList>
            <Scrollbar $w={21}>
              <ArrowUp />
              <ScrollThumb $h={29} $top={6}>
                <Grip />
                <Grip />
                <Grip />
                <Grip />
              </ScrollThumb>
              <ArrowDown />
            </Scrollbar>
          </LibraryBody>

          <MasterHeaderWrap>
            <PanelHeader>
              <PinIcon />
              <PanelTitle $shift={60}>母版</PanelTitle>
              <PanelTools />
            </PanelHeader>
          </MasterHeaderWrap>
        </LeftColumn>

        <CenterColumn>
          <TabStrip>
            <Tab>
              index
              <CloseTab />
            </Tab>
            <TabMenu>
              <ArrowDown $s={5} $c="#777" />
            </TabMenu>
          </TabStrip>
          <RulerTop>
            {TICKS_X.map((t) => (
              <RulerCellX key={t}>{t}</RulerCellX>
            ))}
          </RulerTop>
          <CanvasRow>
            <RulerLeft>
              {TICKS_Y.map((t, i) => (
                <RulerCellY key={t} $mt={i === 0 ? -8.5 : 0}>
                  {i > 0 && <RulerLabelY>{t}</RulerLabelY>}
                </RulerCellY>
              ))}
            </RulerLeft>
            <Canvas>
              <PhoneBody />
            </Canvas>
            <Scrollbar $w={20}>
              <ArrowUp />
              <ScrollThumb $h={33} $top={13}>
                <Grip />
                <Grip />
                <Grip />
                <Grip />
              </ScrollThumb>
              <ArrowDown />
            </Scrollbar>
          </CanvasRow>
        </CenterColumn>

        <RightColumn>
          <PanelHeader>
            <PinIcon />
            <PanelTitle $rshift={25}>检视: 页面</PanelTitle>
          </PanelHeader>
          <InspectorTabs>
            <InspectorTab $on>属性</InspectorTab>
            <InspectorTab>说明</InspectorTab>
            <InspectorTab>样式</InspectorTab>
          </InspectorTabs>
          <InspectorBody>
            <GroupHead>
              <Chevron />
              交互
            </GroupHead>
            <AddCase>
              <PlusIcon />
              <CaseLink>添加用例</CaseLink>
            </AddCase>
            <EventList>
              {EVENTS.map((e) => (
                <EventRow key={e}>
                  <EventIcon />
                  {e}
                </EventRow>
              ))}
            </EventList>
            <MoreEvents>
              更多事件&gt;&gt;&gt;
              <ArrowDown $s={5} $c="#888" />
            </MoreEvents>
          </InspectorBody>
          <AdaptiveRow>
            自适应
            <AdaptiveCheck />
            <AdaptiveText>启用</AdaptiveText>
            <AdaptiveIcon />
          </AdaptiveRow>
        </RightColumn>
      </Main>
    </Window>
  );
}
